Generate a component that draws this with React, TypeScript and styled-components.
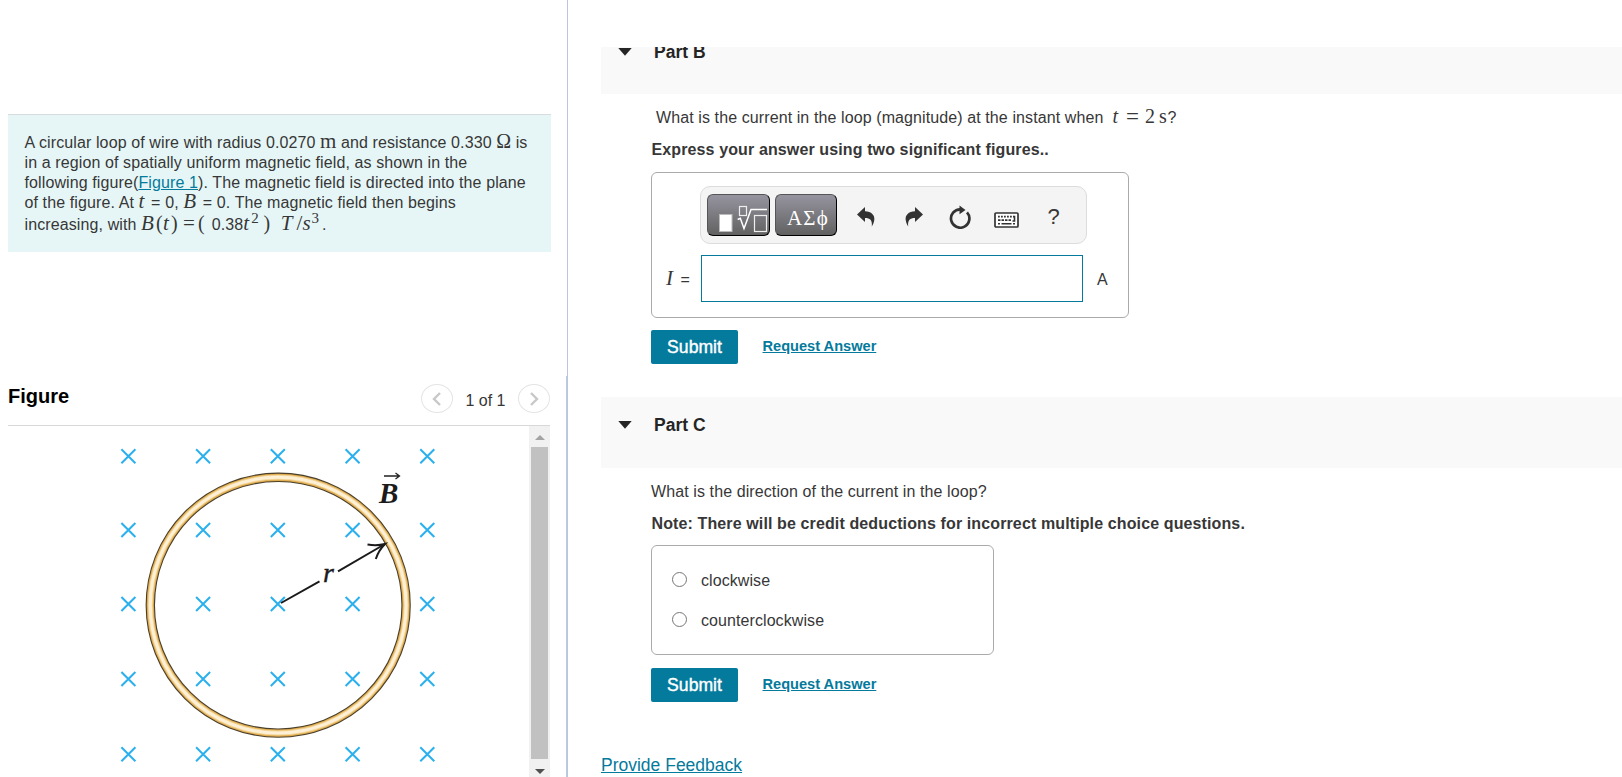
import * as React from "react";
import styled, { createGlobalStyle } from "styled-components";

const GlobalStyle = createGlobalStyle`
	* {
		box-sizing: border-box;
	}

	body {
		margin: 0;
		background: #fff;
		color: #373737;
		font: 16px/20px "Liberation Sans", Arial, sans-serif;
		overflow: hidden;
	}
`;

const columns = [128.4, 203.1, 277.8, 352.6, 427.3];
const rows = [456.3, 530, 604, 679, 754.3];

export default function App(): JSX.Element {
	return (
		<Page>
			<GlobalStyle />
			<LeftPane>
				<Problem>
					<Line>
						A circular loop of wire with radius 0.0270 <Unit $size={21}>m</Unit> and resistance 0.330{" "}
						<Unit $size={20}>Ω</Unit> is
					</Line>
					<Line>in a region of spatially uniform magnetic field, as shown in the</Line>
					<Line>
						following figure(<Link href="#">Figure 1</Link>). The magnetic field is directed into the plane
					</Line>
					<Line>
						of the figure. At <Var $width={8}>t</Var> = 0, <Var $width={15}>B</Var> = 0. The magnetic field
						then begins
					</Line>
					<Line $last>
						increasing, with <Var $width={15}>B</Var>
						<Unit $width={7}>(</Unit>
						<Var $width={8}>t</Var>
						<Unit $width={12}>)</Unit>
						<Unit $size={21} $width={15}>
							=
						</Unit>
						<Unit $width={9}>(</Unit> 0.38<Var $width={8}>t</Var>
						<Sup>2</Sup> <Unit $width={7}>)</Unit>
						<Var $width={22} $align="right">
							T
						</Var>
						<Unit $size={21} $width={10} $align="right">
							/
						</Unit>
						<Var $size={21} $width={9}>
							s
						</Var>
						<Sup>3</Sup>
						<Period>.</Period>
					</Line>
				</Problem>
				<FigurePanel>
					<FigureHeader>
						<FigureTitle>Figure</FigureTitle>
						<Pager>
							<PagerButton aria-label="Previous">
								<Chevron direction="left" />
							</PagerButton>
							<PagerText>1 of 1</PagerText>
							<PagerButton aria-label="Next">
								<Chevron direction="right" />
							</PagerButton>
						</Pager>
					</FigureHeader>
					<FigureBody>
						<FigureDrawing />
						<Scrollbar>
							<Arrow $up />
							<Thumb />
							<Arrow />
						</Scrollbar>
					</FigureBody>
				</FigurePanel>
			</LeftPane>
			<RightPane>
				<PartHeader $clipped>
					<Caret />
					Part B
				</PartHeader>
				<PartBody>
					<Question $indent>
						What is the current in the loop (magnitude) at the instant when &nbsp;
						<Var $size={20} $width={13.5}>
							t
						</Var>
						<WideEquals>=</WideEquals>
						<Unit $width={14}>2</Unit>
						<Unit $width={8.5}>s</Unit>?
					</Question>
					<Instruction>Express your answer using two significant figures..</Instruction>
					<AnswerBox>
						<Toolbar>
							<PaletteButton $width={63} aria-label="Templates">
								<TemplateIcon />
							</PaletteButton>
							<PaletteButton $width={62}>ΑΣϕ</PaletteButton>
							<ToolbarIcons />
						</Toolbar>
						<AnswerRow>
							<AnswerLabel>
								<Var $width={14.5}>I</Var>=
							</AnswerLabel>
							<AnswerInput />
							<AnswerUnit>A</AnswerUnit>
						</AnswerRow>
					</AnswerBox>
					<Actions />
				</PartBody>
				<PartHeader>
					<Caret />
					Part C
				</PartHeader>
				<PartBody>
					<Question>What is the direction of the current in the loop?</Question>
					<Instruction>
						Note: There will be credit deductions for incorrect multiple choice questions.
					</Instruction>
					<Choices>
						<Choice>
							<Radio type="radio" name="direction" />
							clockwise
						</Choice>
						<Choice>
							<Radio type="radio" name="direction" />
							counterclockwise
						</Choice>
					</Choices>
					<Actions />
				</PartBody>
				<Feedback href="#">Provide Feedback</Feedback>
			</RightPane>
		</Page>
	);
}

function Actions(): JSX.Element {
	return (
		<ActionRow>
			<Submit>Submit</Submit>
			<Request href="#">Request Answer</Request>
		</ActionRow>
	);
}

function Caret(): JSX.Element {
	return (
		<svg width="14" height="8" viewBox="0 0 14 8">
			<path d="M0.3 0H13.7L7 7.800Z" fill="#252525" />
		</svg>
	);
}

function Chevron(props: { direction: "left" | "right" }): JSX.Element {
	return (
		<svg width="10" height="14" viewBox="0 0 10 14">
			<path
				d={props.direction === "left" ? "M8 1L2 7L8 13" : "M2 1L8 7L2 13"}
				fill="none"
				stroke="#c8c8c8"
				strokeWidth="2.4"
			/>
		</svg>
	);
}

function TemplateIcon(): JSX.Element {
	return (
		<TemplateSvg width="50" height="28" viewBox="0 0 50 28" fill="none" stroke="#fff">
			<rect x="1.5" y="9.5" width="12.5" height="17" fill="#fff" stroke="#bbb" />
			<rect x="21.5" y="1.5" width="7" height="9" stroke="#eee" strokeWidth="1.2" />
			<path d="M19.700 14.500L22.300 13.300L26 23.500L33 4.500H49" strokeWidth="1.500" />
			<rect x="36.5" y="10.5" width="12" height="16" stroke="#eee" strokeWidth="1.2" />
		</TemplateSvg>
	);
}

function ToolbarIcons(): JSX.Element {
	return (
		<Icons>
			<IconSlot>
				<svg width="18" height="20" viewBox="0 0 18 20">
					<path
						d="M0 7.500L8 0V4.200C14.500 4.500 18 8 17.300 13C17 15.500 16 17.500 14.800 19.500C15.500 13 13 11 8 11V15Z"
						fill="#333"
					/>
				</svg>
			</IconSlot>
			<IconSlot $left={3}>
				<svg width="18" height="20" viewBox="0 0 18 20">
					<path
						d="M18 7.500L10 0V4.200C3.500 4.500 0 8 .7 13C1 15.500 2 17.500 3.200 19.500C2.500 13 5 11 10 11V15Z"
						fill="#333"
					/>
				</svg>
			</IconSlot>
			<IconSlot>
				<svg width="22" height="24" viewBox="0 0 22 24">
					<path d="M11.500 4.300A9.200 9.200 0 1 0 18 7.300" fill="none" stroke="#333" strokeWidth="2.700" />
					<path d="M10.500 .5L16.500 5L10.500 9.300Z" fill="#333" />
				</svg>
			</IconSlot>
			<IconSlot $top={6}>
				<svg width="25" height="16" viewBox="0 0 25 16">
					<rect x="1" y="1" width="23" height="14" rx="1" fill="#fff" stroke="#333" strokeWidth="1.700" />
					<path d="M4 4.700H20" stroke="#333" strokeWidth="1.800" strokeDasharray="1.800 1.200" />
					<path d="M4 8.200H18" stroke="#333" strokeWidth="1.800" strokeDasharray="2.500 1" />
					<path
						d="M4 11.700H6M7.500 11.700H17.500M19 11.700H21M20.500 3.800V9H18.500"
						fill="none"
						stroke="#333"
						strokeWidth="1.600"
					/>
				</svg>
			</IconSlot>
			<IconSlot $top={1}>
				<Help>?</Help>
			</IconSlot>
		</Icons>
	);
}

function FigureDrawing(): JSX.Element {
	return (
		<Drawing viewBox="8 426 521 351">
			{rows.map((y) =>
				columns.map((x) => (
					<path
						key={`${x}-${y}`}
						d={`M${x - 7} ${y - 7}L${x + 7} ${y + 7}M${x + 7} ${y - 7}L${x - 7} ${y + 7}`}
						stroke="#2bb0ee"
						strokeWidth="2"
					/>
				)),
			)}
			<g fill="none">
				<circle cx="278.2" cy="605.2" r="127.900" stroke="#4a3f2c" strokeWidth="9.400" />
				<circle cx="278.2" cy="605.2" r="127.900" stroke="#dfac4e" strokeWidth="7.200" />
				<circle cx="278.2" cy="605.2" r="127.900" stroke="#f3d495" strokeWidth="5" />
				<circle cx="278.2" cy="605.2" r="127.900" stroke="#fdf0d6" strokeWidth="3" />
			</g>
			<g fill="none" stroke="#1c1a1b" strokeWidth="2">
				<path d="M281 603L319.500 581.300M338 571.300L385 544" />
				<path d="M367.500 544.500Q377 546 385 544Q378.500 550.500 375.800 559" />
			</g>
			<path
				d="M384 476H399M395.500 473L399.500 476L395.500 479"
				fill="none"
				stroke="#222"
				strokeWidth="1.300"
			/>
			<FigureText x="379" y="503" fontSize="29" fontWeight="bold">
				B
			</FigureText>
			<FigureText x="323" y="582" fontSize="28" stroke="#1c1a1b" strokeWidth="0.400">
				r
			</FigureText>
		</Drawing>
	);
}

const Page = styled.div`
	display: flex;
	height: 777px;
`;

const LeftPane = styled.div`
	display: flex;
	flex-direction: column;
	width: 568px;
	padding-top: 114px;
	border-right: 1px solid #b8c7dc;
`;

const Problem = styled.div`
	width: 543px;
	height: 138px;
	margin-left: 8px;
	padding: 18px 0 0 16.5px;
	border-top: 1px solid #d9dcdc;
	background: #e6f6f6;
	letter-spacing: 0.11px;
`;

const Line = styled.div<{ $last?: boolean }>`
	height: 20px;
	margin-top: ${(p) => (p.$last ? "2px" : 0)};
	line-height: 20px;
	white-space: nowrap;
`;

interface GlyphProps {
	$size?: number;
	$width?: number;
	$align?: string;
}

const Unit = styled.span<GlyphProps>`
	display: inline-block;
	width: ${(p) => (p.$width ? `${p.$width}px` : "auto")};
	font-family: "Liberation Serif", serif;
	font-size: ${(p) => p.$size ?? 20}px;
	letter-spacing: 0;
	line-height: 1px;
	text-align: ${(p) => p.$align ?? "left"};
`;

const Var = styled(Unit)`
	font-size: ${(p) => p.$size ?? 21}px;
	font-style: italic;
`;

const WideEquals = styled(Unit)`
	width: 19px;
	font-size: 23px;
	vertical-align: -1px;
`;

const Sup = styled.sup`
	font: 15px/1px "Liberation Serif", serif;
	vertical-align: 7px;
`;

const Period = styled.span`
	margin-left: 3px;
`;

const Link = styled.a`
	color: #047a9c;
`;

const FigurePanel = styled.div`
	display: flex;
	flex-direction: column;
	flex: 1;
	margin-top: 124px;
	border-right: 1px solid #b8cade;
`;

const FigureHeader = styled.div`
	display: flex;
	justify-content: space-between;
	width: 542px;
	height: 50px;
	margin-left: 8px;
	padding-top: 8px;
	border-bottom: 1px solid #d8d8d8;
`;

const FigureTitle = styled.h2`
	margin: 0;
	color: #000;
	font-size: 20px;
	line-height: 24px;
`;

const Pager = styled.div`
	display: flex;
	align-items: flex-start;
`;

const PagerButton = styled.button`
	display: flex;
	align-items: center;
	justify-content: center;
	width: 32px;
	height: 29px;
	padding: 0;
	border: 1px solid #e4e4e4;
	border-radius: 50%;
	background: #fff;
`;

const PagerText = styled.span`
	width: 65px;
	padding-top: 7px;
	text-align: center;
`;

const FigureBody = styled.div`
	display: flex;
	width: 542px;
	height: 351px;
	margin-left: 8px;
`;

const Drawing = styled.svg`
	width: 521px;
	height: 351px;
`;

const FigureText = styled.text`
	fill: #1c1a1b;
	font-family: "Liberation Serif", serif;
	font-style: italic;
`;

const Scrollbar = styled.div`
	display: flex;
	flex-direction: column;
	align-items: center;
	width: 21px;
	background: #f1f1f1;
`;

const Arrow = styled.div<{ $up?: boolean }>`
	margin: ${(p) => (p.$up ? "9px 0 7px" : "10px 0 0")};
	border: 5px solid transparent;
	border-top: ${(p) => (p.$up ? "0" : "5px solid #505050")};
	border-bottom: ${(p) => (p.$up ? "5px solid #a3a3a3" : "0")};
`;

const Thumb = styled.div`
	width: 17px;
	height: 312px;
	background: #c1c1c1;
`;

const RightPane = styled.div`
	flex: 1;
	padding: 47px 0 0 33px;
`;

const PartHeader = styled.div<{ $clipped?: boolean }>`
	display: flex;
	align-items: center;
	gap: 22px;
	height: ${(p) => (p.$clipped ? 47 : 71)}px;
	padding: ${(p) => (p.$clipped ? "0 0 38px 17px" : "0 0 16px 17px")};
	overflow: hidden;
	background: #f9f9f9;
	color: #252525;
	font-size: 17.5px;
	font-weight: bold;
`;

const PartBody = styled.div`
	margin-left: 50px;
`;

const Question = styled.div<{ $indent?: boolean }>`
	height: 20px;
	margin-top: 14px;
	margin-left: ${(p) => (p.$indent ? 5 : 0)}px;
	letter-spacing: 0.1px;
`;

const Instruction = styled.div`
	margin-top: 12px;
	margin-bottom: 11px;
	padding-left: 0.5px;
	font-weight: bold;
	letter-spacing: 0.12px;
`;

const AnswerBox = styled.div`
	width: 478px;
	height: 146px;
	margin-top: 12px;
	padding: 13px 0 0 14px;
	border: 1px solid #aaa;
	border-radius: 6px;
`;

const Toolbar = styled.div`
	display: flex;
	gap: 5px;
	width: 387px;
	height: 58px;
	margin-left: 34px;
	padding: 7px 6px;
	border: 1px solid #dcdcdc;
	border-radius: 10px;
	background: #f4f4f4;
`;

const PaletteButton = styled.button<{ $width: number }>`
	display: flex;
	align-items: center;
	justify-content: center;
	width: ${(p) => p.$width}px;
	height: 42px;
	padding: 6px 0 0 4px;
	border: 1px solid #000;
	border-top-color: #555;
	border-left-color: #555;
	border-radius: 6px;
	background: linear-gradient(#96949f, #616161);
	color: #fff;
	font: 21px "Liberation Serif", serif;
	letter-spacing: 1.2px;
`;

const TemplateSvg = styled.svg`
	flex-shrink: 0;
	margin: 2px 0 0 5px;
`;

const Icons = styled.div`
	display: flex;
	padding-top: 3px;
`;

const IconSlot = styled.div<{ $top?: number; $left?: number }>`
	display: flex;
	align-items: center;
	justify-content: center;
	width: 47px;
	padding-top: ${(p) => p.$top ?? 0}px;
	padding-left: ${(p) => p.$left ?? 0}px;
`;

const Help = styled.span`
	font-size: 22px;
`;

const AnswerRow = styled.div`
	display: flex;
	align-items: center;
	height: 47px;
	margin-top: 11px;
`;

const AnswerLabel = styled.span`
	width: 35px;
	padding-top: 2px;
`;

const AnswerInput = styled.input`
	width: 382px;
	height: 47px;
	margin-right: 14px;
	border: 1px solid #047a9c;
`;

const AnswerUnit = styled.span`
	padding-top: 2px;
`;

const ActionRow = styled.div`
	display: flex;
	gap: 24.5px;
	height: 67px;
	margin-top: 12px;
`;

const Submit = styled.button`
	width: 87px;
	height: 34px;
	padding: 0;
	border: 0;
	border-radius: 2px;
	background: #047a9c;
	color: #fff;
	font: 17.6px "Liberation Sans", sans-serif;
	-webkit-text-stroke: 0.4px #fff;
`;

const Request = styled.a`
	padding-top: 6px;
	color: #047a9c;
	font-size: 14.6px;
	font-weight: bold;
`;

const Choices = styled.div`
	display: flex;
	flex-direction: column;
	gap: 20px;
	width: 343px;
	height: 110px;
	margin-bottom: 13px;
	padding: 25px 20px 0;
	border: 1px solid #aaa;
	border-radius: 6px;
`;

const Choice = styled.label`
	display: flex;
	align-items: center;
	gap: 14px;
	height: 20px;
	letter-spacing: 0.08px;
`;

const Radio = styled.input`
	width: 15px;
	height: 15px;
	margin: 0 0 3px;
`;

const Feedback = styled.a`
	display: block;
	width: max-content;
	margin-top: 20px;
	color: #047a9c;
	font-size: 17.5px;
`;
